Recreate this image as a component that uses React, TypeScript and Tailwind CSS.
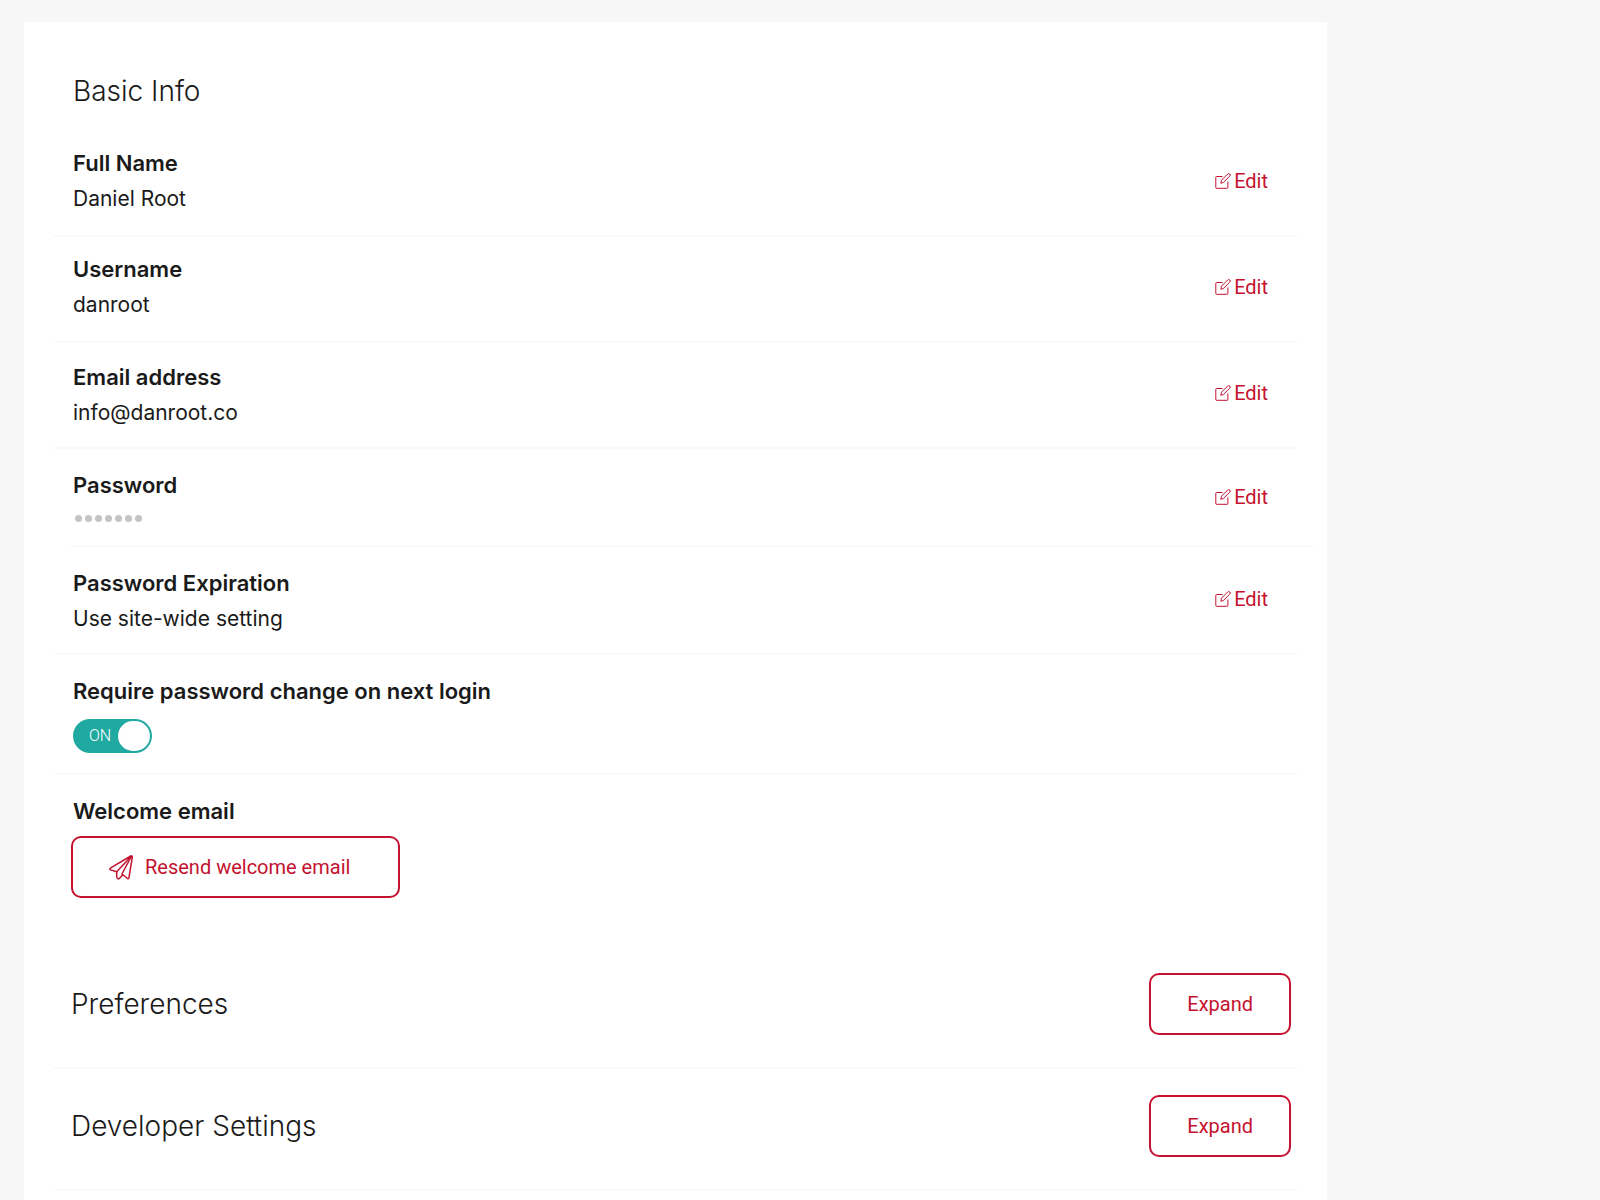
import type { ReactNode } from "react";

function EditIcon() {
  return (
    <svg
      viewBox="0 0 16 16"
      className="h-4 w-4"
      fill="none"
      stroke="currentColor"
      strokeLinejoin="round"
      strokeLinecap="round"
      aria-hidden="true"
    >
      <path d="M7.2 3.5H1.5Q.8 3.5.8 4.2v10.4q0 .7.7.7h10.7q.7 0 .7-.7V8.8" />
      <path d="M5.9 9.9 6.5 7.2 12.7 1a1.4 1.4 0 0 1 2.1 2.1L8.6 9.3Z" />
    </svg>
  );
}

function PlaneIcon() {
  return (
    <svg
      viewBox="0 0 24 24"
      className="h-6 w-6 overflow-visible"
      fill="none"
      stroke="currentColor"
      strokeWidth="1.5"
      strokeLinejoin="round"
      strokeLinecap="round"
      aria-hidden="true"
    >
      <path d="M21.8 1 1.3 13.2q-1.1 1 .2 1.7l6.2 1.9L22.6 1Z" />
      <path d="M22.6 1q.9.2.7 1.4L19.9 22.9q-.3 1.2-1.3.6L12.9 19Z" />
      <path d="M7.7 16.8v4.9q.6 2.9 2.8 1.6l3.1-3.4" />
    </svg>
  );
}

function EditLink({ label }: { label: string }) {
  return (
    <a
      href="#edit"
      aria-label={`Edit ${label}`}
      className="mr-[29px] flex items-center gap-[3px] font-['Roboto',sans-serif] text-xl leading-6 text-[#c4122f]"
    >
      <EditIcon />
      Edit
    </a>
  );
}

function Label({ children }: { children: ReactNode }) {
  return <h3 className="text-[22px] font-semibold leading-9">{children}</h3>;
}

function Value({ children }: { children: ReactNode }) {
  return <p className="text-[21px] leading-9">{children}</p>;
}

function Section({ title }: { title: string }) {
  return (
    <section className="flex items-center justify-between border-b-2 border-[#fafafa] pb-[32px] pl-[18px] pr-[6px] pt-[26px]">
      <h2 className="text-[28px] font-light leading-10">{title}</h2>
      <button
        type="button"
        className="rounded-[10px] border-2 border-[#c4122f] px-[36px] py-[17px] font-['Roboto',sans-serif] text-xl leading-6 text-[#c4122f]"
      >
        Expand
      </button>
    </section>
  );
}

export default function App() {
  return (
    <div className="flex min-h-screen bg-[#f7f7f7] pl-6 pr-[273px] pt-[22px] font-['Inter',sans-serif] text-[#1a1a1a]">
      <main className="grow bg-white pl-[29px] pr-[30px] pt-[49px]">
        <h2 className="pl-5 text-[28px] font-light leading-10">Basic Info</h2>

        <section>
          <div className="mt-[34px] flex justify-between border-b-2 border-[#fafafa] pb-[18px] pl-5">
            <div>
              <Label>Full Name</Label>
              <Value>Daniel Root</Value>
            </div>
            <div className="pt-6">
              <EditLink label="full name" />
            </div>
          </div>

          <div className="flex justify-between border-b-2 border-[#fafafa] pb-[18px] pl-5 pt-[14px]">
            <div>
              <Label>Username</Label>
              <Value>danroot</Value>
            </div>
            <div className="pt-6">
              <EditLink label="username" />
            </div>
          </div>

          <div className="flex justify-between border-b-2 border-[#fafafa] pb-[16px] pl-5 pt-[16px]">
            <div>
              <Label>Email address</Label>
              <Value>info@danroot.co</Value>
            </div>
            <div className="pt-[22px]">
              <EditLink label="email address" />
            </div>
          </div>

          <div className="-mr-[17px] ml-[17px] flex justify-between border-b-2 border-[#fafafa] pb-[12px] pl-[3px] pr-[17px] pt-[18px]">
            <div>
              <Label>Password</Label>
              <div role="img" aria-label="Hidden password" className="flex h-[30px] items-center gap-[3px] pl-[2px]">
                {[0, 1, 2, 3, 4, 5, 6].map((i) => (
                  <span key={i} className="h-[7px] w-[7px] rounded-full bg-[#c4c4c4]" />
                ))}
              </div>
            </div>
            <div className="pt-[18px]">
              <EditLink label="password" />
            </div>
          </div>

          <div className="flex justify-between border-b-2 border-[#fafafa] pb-[16px] pl-5 pt-[18px]">
            <div>
              <Label>Password Expiration</Label>
              <Value>Use site-wide setting</Value>
            </div>
            <div className="pt-[22px]">
              <EditLink label="password expiration" />
            </div>
          </div>

          <div className="border-b-2 border-[#fafafa] pb-[20px] pl-5 pt-[18px]">
            <Label>Require password change on next login</Label>
            <label className="relative mt-[10px] flex h-[34px] w-[79px] items-center rounded-full bg-[#1fa9a1] p-[2px] has-focus-visible:outline-2">
              <input
                type="checkbox"
                role="switch"
                defaultChecked
                aria-label="Require password change on next login"
                className="peer absolute inset-0 cursor-pointer opacity-0"
              />
              <span className="hidden pl-[14px] font-['Roboto',sans-serif] text-base font-light text-white peer-checked:inline">
                ON
              </span>
              <span className="h-[30px] w-[32px] rounded-full bg-white peer-checked:ml-auto" />
            </label>
          </div>

          <div className="pl-[18px] pt-[18px]">
            <div className="pl-[2px]">
              <Label>Welcome email</Label>
            </div>
            <button
              type="button"
              className="mt-[7px] flex items-center gap-3 rounded-[10px] border-2 border-[#c4122f] py-[17px] pl-[36px] pr-12 font-['Roboto',sans-serif] text-xl leading-6 text-[#c4122f]"
            >
              <PlaneIcon />
              Resend welcome email
            </button>
          </div>
        </section>

        <div className="mt-[49px]">
          <Section title="Preferences" />
          <Section title="Developer Settings" />
        </div>
      </main>
    </div>
  );
}
